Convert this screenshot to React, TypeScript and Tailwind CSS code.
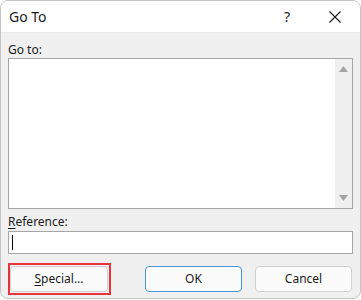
import React from 'react';

const font = { fontFamily: '"Noto Sans", "Open Sans", sans-serif' };

const Underlined: React.FC<{ first: string; rest: string }> = ({ first, rest }) => (
  <span>
    <span className="underline underline-offset-2">{first}</span>
    {rest}
  </span>
);

const App: React.FC = () => {
  return (
    <div className="w-[361px] h-[300px] bg-white" style={font}>
      <div className="w-[361px] h-[299px] rounded-lg border border-[#c4c4c4] bg-[#f0f0f0] overflow-hidden flex flex-col">
        {/* Title bar */}
        <div className="h-[32px] bg-white flex items-center pl-[8px] pr-[19px] border-b border-[#ebebeb] shrink-0">
          <span className="text-[14px] text-[#1b1b1b] leading-none">Go To</span>
          <span className="ml-auto text-[14px] text-[#1b1b1b] leading-none mr-[39px]">?</span>
          <svg width="12" height="12" viewBox="0 0 12 12" className="text-[#1b1b1b]">
            <path d="M0.5 0.5 L11.5 11.5 M11.5 0.5 L0.5 11.5" stroke="currentColor" strokeWidth="1.1" fill="none" />
          </svg>
        </div>

        {/* Body */}
        <div className="flex flex-col px-[7px] pt-[9px] text-[12px] text-[#1b1b1b]">
          <div className="h-[16px] leading-[16px]">Go to:</div>
          <div className="h-[151px] border border-[#a6a6a6] bg-white flex">
            <div className="flex-1" />
            <div className="w-[17px] bg-[#f0f0f0] flex flex-col items-center justify-between py-[7px]">
              <svg width="9" height="6" viewBox="0 0 9 6">
                <path d="M0 6 L4.5 0 L9 6 Z" fill="#a3a3a3" />
              </svg>
              <svg width="9" height="6" viewBox="0 0 9 6">
                <path d="M0 0 L4.5 6 L9 0 Z" fill="#a3a3a3" />
              </svg>
            </div>
          </div>

          <div className="h-[16px] leading-[16px] mt-[5px]">
            <Underlined first="R" rest="eference:" />
          </div>
          <div className="h-[23px] mt-[1px] border border-[#a6a6a6] bg-white flex items-center pl-[3px]">
            <div className="w-[1px] h-[15px] bg-black" />
          </div>

          {/* Buttons */}
          <div className="flex items-start mt-[9px]">
            <div className="w-[103px] h-[32px] border-2 border-[#e8353d] pt-[1px] pr-[1px]">
              <button className="w-[98px] h-[26px] rounded-[4px] border border-[#d1d1d1] bg-[#fbfbfb] text-[12px] text-[#1b1b1b]">
                <Underlined first="S" rest="pecial..." />
              </button>
            </div>
            <div className="ml-auto flex gap-[13px] pt-[3px] pr-[1px]">
              <button className="w-[97px] h-[26px] rounded-[4px] border border-[#4a97dc] bg-[#fbfbfb] text-[12px] text-[#1b1b1b]">
                OK
              </button>
              <button className="w-[97px] h-[26px] rounded-[4px] border border-[#d1d1d1] bg-[#fbfbfb] text-[12px] text-[#1b1b1b]">
                Cancel
              </button>
            </div>
          </div>
        </div>
      </div>
    </div>
  );
};

export default App;
